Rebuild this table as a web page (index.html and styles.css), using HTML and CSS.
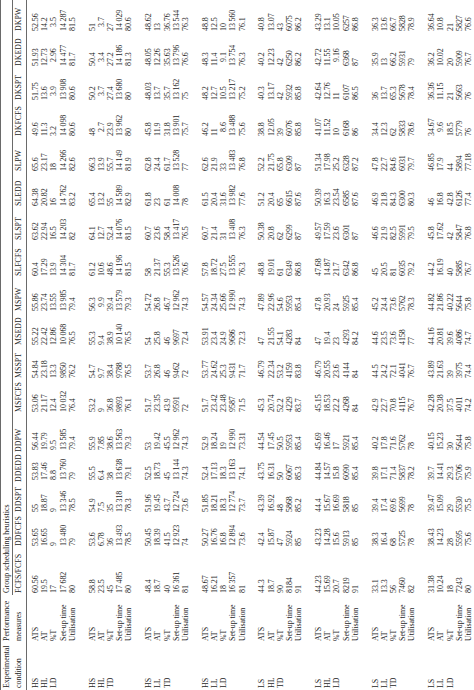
FILE: index.html
```html
<!DOCTYPE html>
<html lang="en">
<head>
<meta charset="utf-8">
<title>Group scheduling heuristics</title>
<link rel="stylesheet" href="styles.css">
</head>
<body>
<div class="page">
<div class="sheet">
<table class="tbl">
<colgroup>
<col class="c-exp"><col class="c-perf"><col class="c-fcfs">
<col class="c34"><col class="c32"><col class="c30"><col class="c38">
<col class="c34"><col class="c33"><col class="c34"><col class="c35">
<col class="c36"><col class="c34"><col class="c35"><col class="c35">
<col class="c36"><col class="c34"><col class="c35"><col class="c33">
</colgroup>
<thead>
<tr class="h1"><th>Experimental</th><th>Performance</th><th class="grp" colspan="17">Group scheduling heuristics</th></tr>
<tr class="h2"><th>condition</th><th>measures</th><th>FCFS/FCFS</th><th>DDFCFS</th><th>DDSPT</th><th class="tight">DDEDD</th><th class="tight">DDPW</th><th>MSFCFS</th><th>MSSPT</th><th>MSEDD</th><th>MSPW</th><th>SLFCFS</th><th>SLSPT</th><th>SLEDD</th><th>SLPW</th><th>DKFCFS</th><th>DKSPT</th><th>DKEDD</th><th>DKPW</th></tr>
</thead>
<tbody>
<tr class="first"><td>HS</td><td>ATS</td><td>60.56</td><td>53.65</td><td>55</td><td>53.83</td><td>56.44</td><td>53.06</td><td>54.84</td><td>55.22</td><td>55.86</td><td>60.4</td><td>63.62</td><td>64.38</td><td>65.6</td><td>49.6</td><td>51.75</td><td>51.93</td><td>52.56</td></tr>
<tr><td>HL</td><td>AT</td><td>19.5</td><td>16.65</td><td>18.87</td><td>17.46</td><td>19.79</td><td>21.17</td><td>23.18</td><td>22.42</td><td>23.74</td><td>17.29</td><td>22.94</td><td>20.82</td><td>23.17</td><td>11.3</td><td>13.6</td><td>12.73</td><td>14.2</td></tr>
<tr><td>LD</td><td>%T</td><td>17</td><td>9</td><td>9</td><td>8.8</td><td>9.5</td><td>12.4</td><td>13.3</td><td>12.86</td><td>13.55</td><td>13.9</td><td>16.5</td><td>16</td><td>18</td><td>3.2</td><td class="ph">3.9</td><td class="ph">2.96</td><td class="ph">3.5</td></tr>
<tr><td></td><td>Set-up time</td><td>17&#8201;682</td><td>13&#8201;480</td><td>13&#8201;346</td><td>13&#8201;760</td><td>13&#8201;585</td><td>10&#8201;032</td><td>9850</td><td>10&#8201;068</td><td>13&#8201;985</td><td>14&#8201;304</td><td>14&#8201;203</td><td>14&#8201;762</td><td>14&#8201;266</td><td>14&#8201;098</td><td>13&#8201;908</td><td>14&#8201;477</td><td>14&#8201;287</td></tr>
<tr><td></td><td>Utilisation</td><td>80</td><td>79</td><td>78.5</td><td>79</td><td>79.4</td><td>76.4</td><td>76.2</td><td>76.5</td><td>79.4</td><td>81.7</td><td>82</td><td>83.2</td><td>82.6</td><td>80.6</td><td>80.6</td><td>81.7</td><td>81.5</td></tr>

<tr class="grp-start"><td>HS</td><td>ATS</td><td>58.8</td><td>53.6</td><td>54.9</td><td>55.5</td><td>55.9</td><td>53.2</td><td>54.7</td><td>55.3</td><td>56.3</td><td>61.2</td><td>64.1</td><td>65.4</td><td>66.3</td><td>48</td><td>50.2</td><td>50.4</td><td>51</td></tr>
<tr><td>HL</td><td>AT</td><td>23.5</td><td>6.78</td><td>7.5</td><td>6.4</td><td>7.85</td><td>9</td><td>9.7</td><td>9.4</td><td class="ph">9.9</td><td>10.6</td><td>12.7</td><td>13.2</td><td>13.9</td><td class="ph">2.7</td><td class="ph">3.7</td><td class="ph">3.4</td><td class="ph">3.7</td></tr>
<tr><td>TD</td><td>%T</td><td>45</td><td>36</td><td>35</td><td>38</td><td>38.6</td><td>36.8</td><td>38.4</td><td>38.9</td><td>39.4</td><td>48.6</td><td>52.4</td><td>55</td><td>55.7</td><td>23.9</td><td>27.4</td><td>27.2</td><td>27</td></tr>
<tr><td></td><td>Set-up time</td><td>17&#8201;485</td><td>13&#8201;493</td><td>13&#8201;318</td><td>13&#8201;638</td><td>13&#8201;563</td><td>9893</td><td>9788</td><td>10&#8201;140</td><td>13&#8201;579</td><td>14&#8201;196</td><td>14&#8201;076</td><td>14&#8201;589</td><td>14&#8201;149</td><td>13&#8201;962</td><td>13&#8201;680</td><td>14&#8201;186</td><td>14&#8201;029</td></tr>
<tr><td></td><td>Utilisation</td><td>80</td><td>78.5</td><td>78.3</td><td>79.1</td><td>79.3</td><td>76.1</td><td>76.5</td><td>76.5</td><td>79.3</td><td>81.5</td><td>81.5</td><td>82.9</td><td>81.9</td><td>80</td><td>80</td><td>81.3</td><td>80.6</td></tr>

<tr class="grp-start"><td>HS</td><td>ATS</td><td>48.4</td><td>50.45</td><td>51.96</td><td>52.5</td><td>53</td><td>51.7</td><td>53.7</td><td>54</td><td>54.72</td><td>58</td><td>60.7</td><td>61.8</td><td>62.8</td><td>45.8</td><td>48.03</td><td>48.05</td><td>48.62</td></tr>
<tr><td>LL</td><td>AT</td><td>18.7</td><td>18.39</td><td>19.45</td><td>18.73</td><td>19.42</td><td>23.35</td><td>26.8</td><td>25.8</td><td>26.8</td><td>21.37</td><td>23.6</td><td>23</td><td>24.4</td><td>11.9</td><td>13.7</td><td>12.26</td><td>13</td></tr>
<tr><td>TD</td><td>%T</td><td>40</td><td>41.5</td><td>43.7</td><td>45</td><td>45.5</td><td>43.9</td><td>46</td><td>46</td><td>46.7</td><td>55.3</td><td>58.4</td><td>61</td><td>61.7</td><td>31.8</td><td>35.7</td><td>35.63</td><td>36.76</td></tr>
<tr><td></td><td>Set-up time</td><td>16&#8201;361</td><td>12&#8201;923</td><td>12&#8201;724</td><td>13&#8201;144</td><td>12&#8201;962</td><td>9591</td><td>9462</td><td>9697</td><td>12&#8201;962</td><td>13&#8201;526</td><td>13&#8201;417</td><td>14&#8201;008</td><td>13&#8201;528</td><td>13&#8201;901</td><td>13&#8201;162</td><td>13&#8201;796</td><td>13&#8201;544</td></tr>
<tr><td></td><td>Utilisation</td><td>81</td><td>74</td><td>73.6</td><td>74.3</td><td>74.3</td><td>72</td><td>72</td><td>72.4</td><td>74.3</td><td>76.6</td><td>76.5</td><td>78</td><td>77</td><td>75.7</td><td>75</td><td>76.6</td><td>76.3</td></tr>

<tr class="grp-start"><td>HS</td><td>ATS</td><td>48.67</td><td>50.27</td><td>51.85</td><td>52.4</td><td>52.9</td><td>51.7</td><td>53.77</td><td>53.91</td><td>54.57</td><td>57.8</td><td>60.7</td><td>61.5</td><td>62.6</td><td>46.2</td><td>48.2</td><td>48.3</td><td>48.8</td></tr>
<tr><td>LL</td><td>AT</td><td>16.21</td><td>16.76</td><td>18.21</td><td>17.13</td><td>18.24</td><td>23.42</td><td>24.62</td><td>23.4</td><td>24.34</td><td>18.72</td><td>21.4</td><td>20.4</td><td>21.9</td><td>11</td><td>12.7</td><td>11.4</td><td>12.5</td></tr>
<tr><td>LD</td><td>%T</td><td>18</td><td>16.8</td><td>18.3</td><td>18.3</td><td>19</td><td>23.48</td><td>25.3</td><td>24.9</td><td>25.66</td><td>27.5</td><td>31</td><td>31.6</td><td>33</td><td class="ph">8.6</td><td>10.5</td><td class="ph">9.1</td><td>10</td></tr>
<tr><td></td><td>Set-up time</td><td>16&#8201;357</td><td>12&#8201;894</td><td>12&#8201;774</td><td>13&#8201;163</td><td>12&#8201;990</td><td>9587</td><td>9431</td><td>9686</td><td>12&#8201;990</td><td>13&#8201;555</td><td>13&#8201;408</td><td>13&#8201;982</td><td>13&#8201;483</td><td>13&#8201;488</td><td>13&#8201;217</td><td>13&#8201;754</td><td>13&#8201;560</td></tr>
<tr><td></td><td>Utilisation</td><td>81</td><td>73.6</td><td>73.7</td><td>74.1</td><td>73.31</td><td>71.5</td><td>71.7</td><td>72.3</td><td>74.3</td><td>76.3</td><td>76.3</td><td>77.6</td><td>76.8</td><td>75.6</td><td>75.2</td><td>76.3</td><td>76.1</td></tr>

<tr class="grp-start"><td>LS</td><td>ATS</td><td>44.3</td><td>42.4</td><td>43.39</td><td>43.75</td><td>44.54</td><td>45.3</td><td>46.79</td><td>47</td><td>47.89</td><td>48.8</td><td>50.38</td><td>51.2</td><td>52.2</td><td>38.8</td><td>40.3</td><td>40.2</td><td>40.8</td></tr>
<tr><td>HL</td><td>AT</td><td>18.7</td><td>15.87</td><td>16.92</td><td>16.31</td><td>17.45</td><td>20.74</td><td>22.34</td><td>21.55</td><td>22.96</td><td>19.01</td><td>20.8</td><td>20.4</td><td>21.75</td><td>12.05</td><td>13.17</td><td>12.23</td><td>13.07</td></tr>
<tr><td>TD</td><td>%T</td><td>90</td><td>47</td><td>48</td><td>50</td><td>50.5</td><td>52.2</td><td>53.2</td><td>54.1</td><td>54.6</td><td>61</td><td>62</td><td>65</td><td>65.8</td><td>39</td><td>42</td><td>42</td><td>43</td></tr>
<tr><td></td><td>Set-up time</td><td>8184</td><td>5924</td><td>5868</td><td>6067</td><td>5953</td><td>4229</td><td>4159</td><td>4283</td><td>5953</td><td>6349</td><td>6299</td><td>6615</td><td>6309</td><td>6076</td><td>5932</td><td>6250</td><td>6075</td></tr>
<tr><td></td><td>Utilisation</td><td>91</td><td>85</td><td>85.2</td><td>85.3</td><td>85.4</td><td>83.7</td><td>83.8</td><td>84</td><td>85.4</td><td>86.8</td><td>87</td><td>87.6</td><td>87</td><td>85.8</td><td>85.8</td><td>86.2</td><td>86.2</td></tr>

<tr class="grp-start"><td>LS</td><td>ATS</td><td>44.23</td><td>43.23</td><td>44.4</td><td>44.84</td><td>45.69</td><td>45.15</td><td>46.79</td><td>47</td><td>47.8</td><td>47.68</td><td>49.57</td><td>50.39</td><td>51.34</td><td>41.07</td><td>42.64</td><td>42.72</td><td>43.29</td></tr>
<tr><td>HL</td><td>AT</td><td>15.69</td><td>14.28</td><td>15.67</td><td>14.57</td><td>16.46</td><td>18.53</td><td>20.55</td><td>19.4</td><td>20.93</td><td>14.87</td><td>17.59</td><td>16.3</td><td>17.98</td><td>11.52</td><td>12.76</td><td>11.55</td><td>13.1</td></tr>
<tr><td>LD</td><td>%T</td><td>20.7</td><td>15.6</td><td>16.69</td><td>15.8</td><td>17</td><td>22.2</td><td>23.6</td><td>23</td><td>24</td><td>21.7</td><td>23.6</td><td>23.54</td><td>25.2</td><td>10</td><td>11</td><td class="ph">9.16</td><td>10.05</td></tr>
<tr><td></td><td>Set-up time</td><td>8219</td><td>5913</td><td>5818</td><td>6090</td><td>5921</td><td>4268</td><td>4144</td><td>4293</td><td>5925</td><td>6342</td><td>6301</td><td>6585</td><td>6328</td><td>6168</td><td>6107</td><td>6368</td><td>6257</td></tr>
<tr><td></td><td>Utilisation</td><td>91</td><td>85</td><td>85</td><td>85.4</td><td>85.4</td><td>84</td><td>84</td><td>84.2</td><td>85.4</td><td>86.8</td><td>87</td><td>87.6</td><td>87.2</td><td>86</td><td>86.5</td><td>87</td><td>86.8</td></tr>

<tr class="grp-start"><td>LS</td><td>ATS</td><td>33.1</td><td>38.3</td><td>39.4</td><td>39.8</td><td>40.2</td><td>42.9</td><td>44.5</td><td>44.6</td><td>45.2</td><td>45</td><td>46.6</td><td>46.9</td><td>47.8</td><td>34.4</td><td>36</td><td>35.9</td><td>36.3</td></tr>
<tr><td>LL</td><td>AT</td><td>13.3</td><td>16.4</td><td>17.4</td><td>17.1</td><td>17.8</td><td>22.7</td><td>24.2</td><td>23.5</td><td>24.4</td><td>20.5</td><td>21.9</td><td>21.8</td><td>22.7</td><td>12.3</td><td>13.7</td><td>13</td><td>13.6</td></tr>
<tr><td>TD</td><td>%T</td><td>56</td><td>68</td><td>69.6</td><td>71.4</td><td>71.6</td><td>70.8</td><td>72.1</td><td>73.6</td><td>73.6</td><td>81</td><td>82.5</td><td>84.3</td><td>84.6</td><td>62</td><td>65.3</td><td>66.2</td><td>66.7</td></tr>
<tr><td></td><td>Set-up time</td><td>7460</td><td>5725</td><td>5699</td><td>5837</td><td>5762</td><td>4115</td><td>4041</td><td>4158</td><td>5762</td><td>6035</td><td>5991</td><td>6300</td><td>6031</td><td>5833</td><td>5678</td><td>5931</td><td>5828</td></tr>
<tr><td></td><td>Utilisation</td><td>82</td><td>78</td><td>78</td><td>78.2</td><td>78</td><td>76.7</td><td>76.7</td><td>77</td><td>78.3</td><td>79.2</td><td>79.5</td><td>80.3</td><td>79.7</td><td>78.6</td><td>78.4</td><td>79</td><td>78.9</td></tr>

<tr class="grp-start"><td>LS</td><td>ATS</td><td>31.38</td><td>38.43</td><td>39.47</td><td>39.7</td><td>40.15</td><td>42.28</td><td>43.89</td><td>44.16</td><td>44.82</td><td>44.2</td><td>45.8</td><td>46</td><td>46.85</td><td>34.67</td><td>36.36</td><td>36.2</td><td>36.64</td></tr>
<tr><td>LL</td><td>AT</td><td>10.24</td><td>14.23</td><td>15.09</td><td>14.41</td><td>15.23</td><td>20.38</td><td>21.63</td><td>20.81</td><td>21.86</td><td>16.19</td><td>17.62</td><td>16.8</td><td>17.9</td><td class="ph">9.6</td><td>11.15</td><td>10.02</td><td>10.8</td></tr>
<tr><td>LD</td><td>%T</td><td>18</td><td>28</td><td>29</td><td>29.3</td><td>30</td><td>37.5</td><td>39</td><td>39.6</td><td>40.22</td><td>40</td><td>42</td><td>42.8</td><td>44</td><td>18.5</td><td>21</td><td>20</td><td>21</td></tr>
<tr><td></td><td>Set-up time</td><td>7243</td><td>5595</td><td>5530</td><td>5706</td><td>5644</td><td>4011</td><td>3975</td><td>4086</td><td>5644</td><td>5885</td><td>5847</td><td>6126</td><td>5894</td><td>5779</td><td>5663</td><td>5909</td><td>5827</td></tr>
<tr><td></td><td>Utilisation</td><td>80</td><td>75.6</td><td>75.5</td><td>75.9</td><td>75.8</td><td>74.2</td><td>74.4</td><td>74.7</td><td>75.8</td><td>76.7</td><td>76.8</td><td>77.4</td><td>77.18</td><td>76</td><td>76</td><td>76.7</td><td>76.6</td></tr>
</tbody>
</table>
</div>
</div>
</body>
</html>
```

FILE: styles.css
```css
html, body {
  margin: 0;
  padding: 0;
  background: #ffffff;
}

.page {
  width: 474px;
  height: 690px;
  overflow: hidden;
}

/* The table is printed sideways: it is laid out as a 690 x 474 sheet and turned a quarter turn. */
.sheet {
  width: 690px;
  height: 474px;
  transform-origin: 0 0;
  transform: translateY(690px) rotate(-90deg);
  font-family: "Liberation Serif", "Times New Roman", serif;
  font-size: 7.9px;
  color: #1e1e1e;
}

.tbl {
  width: 690px;
  border-collapse: collapse;
  table-layout: fixed;
  border-top: 1px solid #6a6a6a;
}

.c-exp { width: 47px; }
.c-perf { width: 48px; }
.c-fcfs { width: 47px; }
.c30 { width: 30px; }
.c32 { width: 32px; }
.c33 { width: 33px; }
.c34 { width: 34px; }
.c35 { width: 35px; }
.c36 { width: 36px; }
.c38 { width: 38px; }

.tbl th,
.tbl td {
  padding: 0 0 0 2px;
  line-height: 9.2px;
  white-space: nowrap;
  text-align: left;
  font-weight: normal;
  vertical-align: top;
  overflow: visible;
}

.h1 th {
  padding-top: 1px;
  line-height: 10px;
}

.h1 .grp {
  border-bottom: 1px solid #6a6a6a;
}

.h2 th {
  line-height: 11px;
  padding-bottom: 2px;
  border-bottom: 1px solid #6a6a6a;
}

.h2 .tight { padding-left: 0; }

.first td {
  padding-top: 4px;
}

.grp-start td {
  padding-top: 10.6px;
}

.tbl td.ph {
  padding-left: 6px;
}
```
